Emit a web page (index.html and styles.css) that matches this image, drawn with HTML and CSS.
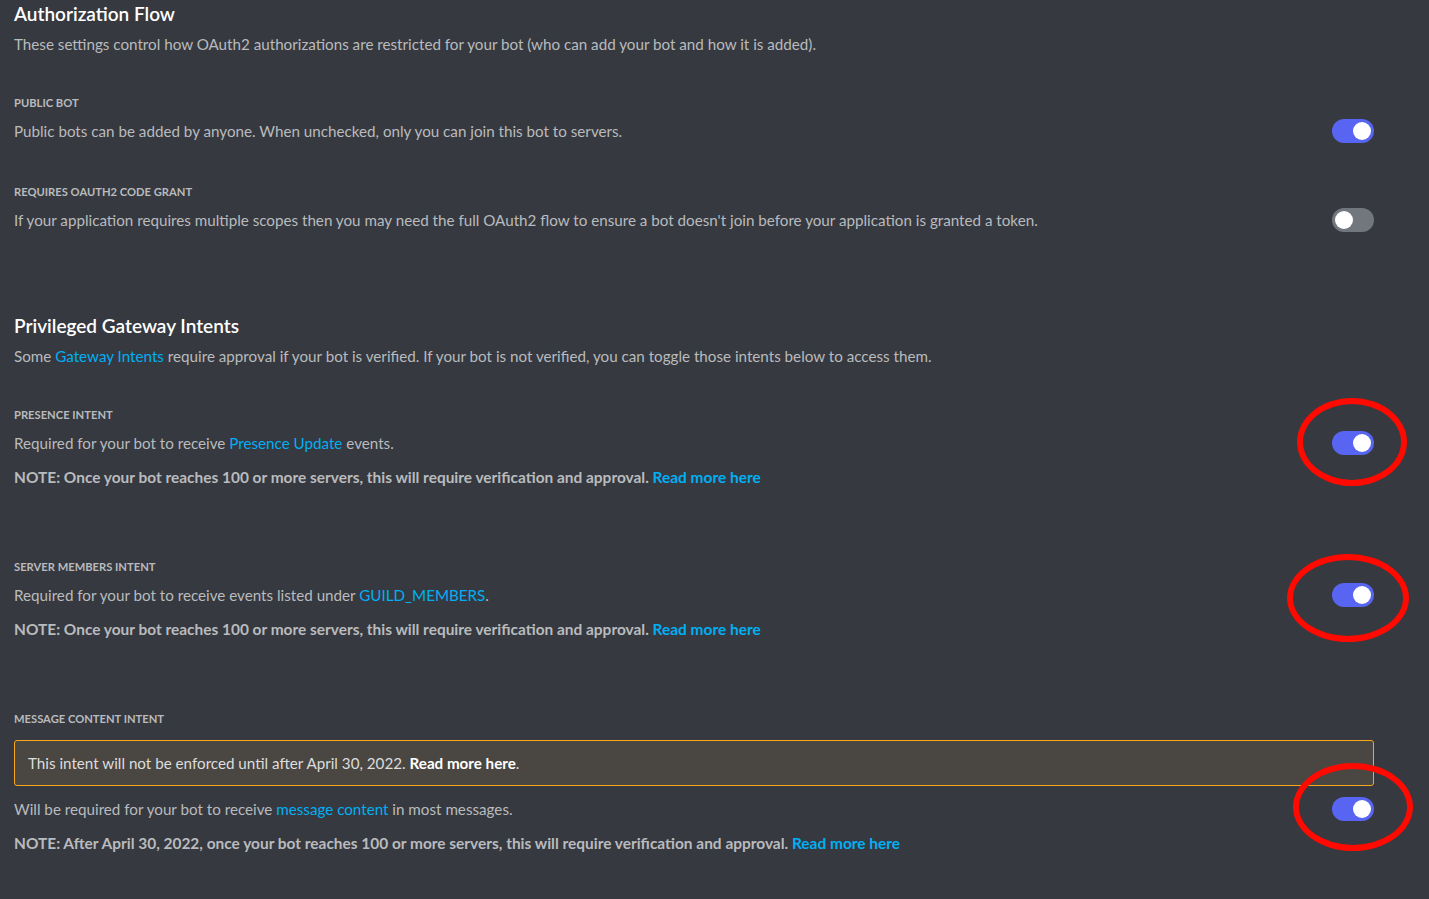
FILE: index.html
```html
<!DOCTYPE html>
<html lang="en">
<head>
    <meta charset="UTF-8">
    <meta name="viewport" content="width=device-width, initial-scale=1.0">
    <title>Bot Settings</title>
    <link rel="stylesheet" href="styles.css">
</head>
<body>
    <div class="page">
        <section class="section">
            <h2 class="section-title">Authorization Flow</h2>
            <p class="section-desc">These settings control how OAuth2 authorizations are restricted for your bot (who can add your bot and how it is added).</p>

            <div class="setting">
                <div class="setting-label">Public Bot</div>
                <div class="setting-row">
                    <div class="setting-desc">Public bots can be added by anyone. When unchecked, only you can join this bot to servers.</div>
                    <div class="toggle on"><span class="knob"></span></div>
                </div>
            </div>

            <div class="setting">
                <div class="setting-label">Requires OAuth2 Code Grant</div>
                <div class="setting-row">
                    <div class="setting-desc">If your application requires multiple scopes then you may need the full OAuth2 flow to ensure a bot doesn't join before your application is granted a token.</div>
                    <div class="toggle"><span class="knob"></span></div>
                </div>
            </div>
        </section>

        <section class="section">
            <h2 class="section-title">Privileged Gateway Intents</h2>
            <p class="section-desc">Some <a href="#">Gateway Intents</a> require approval if your bot is verified. If your bot is not verified, you can toggle those intents below to access them.</p>

            <div class="setting">
                <div class="setting-label">Presence Intent</div>
                <div class="setting-row">
                    <div class="setting-desc">Required for your bot to receive <a href="#">Presence Update</a> events.</div>
                    <div class="toggle on">
                        <span class="knob"></span>
                        <span class="circled circled-1"></span>
                    </div>
                </div>
                <div class="setting-note">NOTE: Once your bot reaches 100 or more servers, this will require verification and approval. <a href="#">Read more here</a></div>
            </div>

            <div class="setting">
                <div class="setting-label">Server Members Intent</div>
                <div class="setting-row">
                    <div class="setting-desc">Required for your bot to receive events listed under <a href="#">GUILD_MEMBERS</a>.</div>
                    <div class="toggle on">
                        <span class="knob"></span>
                        <span class="circled circled-2"></span>
                    </div>
                </div>
                <div class="setting-note">NOTE: Once your bot reaches 100 or more servers, this will require verification and approval. <a href="#">Read more here</a></div>
            </div>

            <div class="setting">
                <div class="setting-label">Message Content Intent</div>
                <div class="warning">This intent will not be enforced until after April 30, 2022. <strong>Read more here</strong>.</div>
                <div class="setting-row">
                    <div class="setting-desc">Will be required for your bot to receive <a href="#">message content</a> in most messages.</div>
                    <div class="toggle on">
                        <span class="knob"></span>
                        <span class="circled circled-3"></span>
                    </div>
                </div>
                <div class="setting-note">NOTE: After April 30, 2022, once your bot reaches 100 or more servers, this will require verification and approval. <a href="#">Read more here</a></div>
            </div>
        </section>
    </div>
</body>
</html>
```

FILE: styles.css
```css
* {
    box-sizing: border-box;
}

body {
    margin: 0;
    background-color: #36393f;
    font-family: 'Lato', 'Noto Sans', sans-serif;
    color: #b9bbbe;
}

.page {
    padding: 2px 55px 0 14px;
}

a {
    color: #00aff4;
    text-decoration: none;
}

.section + .section {
    margin-top: 82px;
}

.section-title {
    margin: 0;
    font-size: 19px;
    line-height: 24px;
    font-weight: 600;
    color: #fff;
}

.section-desc {
    margin: 8px 0 0;
    font-size: 15.2px;
    line-height: 20px;
}

.setting {
    margin-top: 41px;
}

.setting-label {
    font-size: 11.2px;
    line-height: 16px;
    font-weight: 700;
    text-transform: uppercase;
}

.setting-row {
    display: flex;
    align-items: center;
    justify-content: space-between;
    margin-top: 8px;
}

.setting-desc {
    font-size: 15.2px;
    line-height: 20px;
}

.setting-note {
    margin: 12px 0 72px;
    font-size: 15.45px;
    line-height: 20px;
    font-weight: 700;
}

.setting:last-child .setting-note {
    margin-bottom: 0;
}

.warning {
    margin: 13px 0 11px;
    padding: 12px 13px;
    background-color: #4a4641;
    border: 1px solid #faa61a;
    border-radius: 3px;
    color: #dcddde;
    font-size: 15.2px;
    line-height: 20px;
}

.warning strong {
    color: #fff;
}

.warning + .setting-row {
    margin-top: 0;
}

.toggle {
    position: relative;
    flex-shrink: 0;
    width: 42px;
    height: 24px;
    border-radius: 12px;
    background-color: #72767d;
}

.toggle.on {
    background-color: #5865f2;
}

.knob {
    position: absolute;
    top: 3px;
    left: 3px;
    width: 18px;
    height: 18px;
    border-radius: 50%;
    background-color: #fff;
}

.toggle.on .knob {
    left: 21px;
}

/* red annotation rings drawn over the toggles */
.circled {
    position: absolute;
    height: 88px;
    border: 6px solid #fe0a00;
    border-radius: 50%;
}

.circled-1 {
    width: 110px;
    left: -35px;
    top: -33px;
}

.circled-2 {
    width: 122px;
    left: -45px;
    top: -29px;
}

.circled-3 {
    width: 120px;
    left: -39px;
    top: -34px;
}
```
